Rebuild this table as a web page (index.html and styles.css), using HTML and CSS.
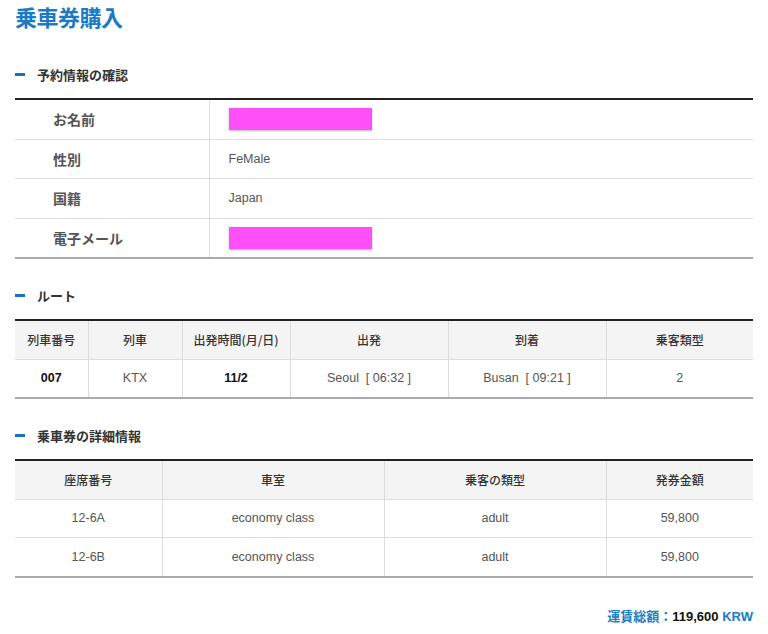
FILE: index.html
```html
<!DOCTYPE html>
<html lang="ja">
<head>
<meta charset="utf-8">
<title>乗車券購入</title>
<link rel="stylesheet" href="styles.css">
</head>
<body>
<main class="page">
  <h1 class="title">乗車券購入</h1>

  <section class="section first">
    <h2 class="sec-head"><span class="dash"></span>予約情報の確認</h2>
    <table class="tbl info">
      <colgroup><col class="c-label"><col></colgroup>
      <tr><th>お名前</th><td><span class="mask"></span></td></tr>
      <tr><th>性別</th><td>FeMale</td></tr>
      <tr><th>国籍</th><td>Japan</td></tr>
      <tr><th>電子メール</th><td><span class="mask"></span></td></tr>
    </table>
  </section>

  <section class="section">
    <h2 class="sec-head"><span class="dash"></span>ルート</h2>
    <table class="tbl grid">
      <colgroup>
        <col style="width:73px"><col style="width:94px"><col style="width:108px">
        <col style="width:158px"><col style="width:158px"><col>
      </colgroup>
      <thead>
        <tr><th>列車番号</th><th>列車</th><th>出発時間(月/日)</th><th>出発</th><th>到着</th><th>乗客類型</th></tr>
      </thead>
      <tbody>
        <tr><td class="strong">007</td><td>KTX</td><td class="strong">11/2</td><td>Seoul &nbsp;[ 06:32 ]</td><td>Busan &nbsp;[ 09:21 ]</td><td>2</td></tr>
      </tbody>
    </table>
  </section>

  <section class="section">
    <h2 class="sec-head"><span class="dash"></span>乗車券の詳細情報</h2>
    <table class="tbl grid">
      <colgroup>
        <col style="width:147px"><col style="width:222px"><col style="width:222px"><col>
      </colgroup>
      <thead>
        <tr><th>座席番号</th><th>車室</th><th>乗客の類型</th><th>発券金額</th></tr>
      </thead>
      <tbody>
        <tr><td>12-6A</td><td>economy class</td><td>adult</td><td>59,800</td></tr>
        <tr><td>12-6B</td><td>economy class</td><td>adult</td><td>59,800</td></tr>
      </tbody>
    </table>
  </section>

  <p class="total"><span class="blue">運賃総額：</span><span class="amount">119,600</span> <span class="blue">KRW</span></p>
</main>
</body>
</html>
```

FILE: styles.css
```css
html, body {
  margin: 0;
  padding: 0;
  background: #fff;
}
body {
  font-family: "Liberation Sans", "Noto Sans CJK JP", sans-serif;
  color: #555;
}
.page {
  padding: 0 15px;
}
.title {
  margin: 0;
  font-family: "Noto Sans CJK JP", sans-serif;
  font-size: 22px;
  line-height: 32px;
  font-weight: 700;
  color: #1b7bc4;
  letter-spacing: -0.5px;
}
.section.first {
  margin-top: 32px;
}
.section {
  margin-top: 26px;
}
.sec-head {
  display: flex;
  align-items: center;
  margin: 0 0 14px;
  height: 20px;
  font-family: "Noto Sans CJK JP", sans-serif;
  font-size: 13px;
  font-weight: 700;
  color: #333;
}
.dash {
  width: 10px;
  height: 3px;
  background: #1a72be;
  margin-right: 12px;
}
.tbl {
  width: 100%;
  border-collapse: collapse;
  table-layout: fixed;
  border-top: 2px solid #222;
  border-bottom: 2px solid #aaa;
}
.tbl th, .tbl td {
  padding: 0;
}
.info .c-label {
  width: 194px;
}
.info th, .info td {
  height: 38.5px;
  border-bottom: 1px solid #ddd;
}
.info tr:last-child th, .info tr:last-child td {
  border-bottom: none;
}
.info th {
  text-align: left;
  padding-left: 38px;
  font-family: "Noto Sans CJK JP", sans-serif;
  font-size: 14px;
  font-weight: 700;
  color: #555;
  border-right: 1px solid #ddd;
}
.info td {
  padding-left: 19px;
  font-size: 12.5px;
  color: #555;
}
.mask {
  display: block;
  width: 143px;
  height: 22px;
  background: #ff4ff8;
  box-shadow: 0 1px 2px rgba(0, 0, 0, 0.3);
}
.grid th, .grid td {
  height: 37.5px;
  text-align: center;
  border-right: 1px solid #ddd;
  font-size: 12.5px;
}
.grid th:last-child, .grid td:last-child {
  border-right: none;
}
.grid thead th {
  background: #f4f4f4;
  font-family: "Noto Sans CJK JP", sans-serif;
  font-size: 12px;
  font-weight: 500;
  color: #333;
  border-bottom: 1px solid #ddd;
}
.grid tbody td {
  color: #555;
}
.grid tbody tr:not(:last-child) td {
  border-bottom: 1px solid #ddd;
}
.grid td.strong {
  font-weight: 700;
  color: #111;
}
.total {
  margin: 29px 0 0;
  text-align: right;
  font-size: 13px;
  line-height: 20px;
  font-weight: 700;
  color: #111;
}
.total .blue {
  color: #1b7bc4;
}
```
